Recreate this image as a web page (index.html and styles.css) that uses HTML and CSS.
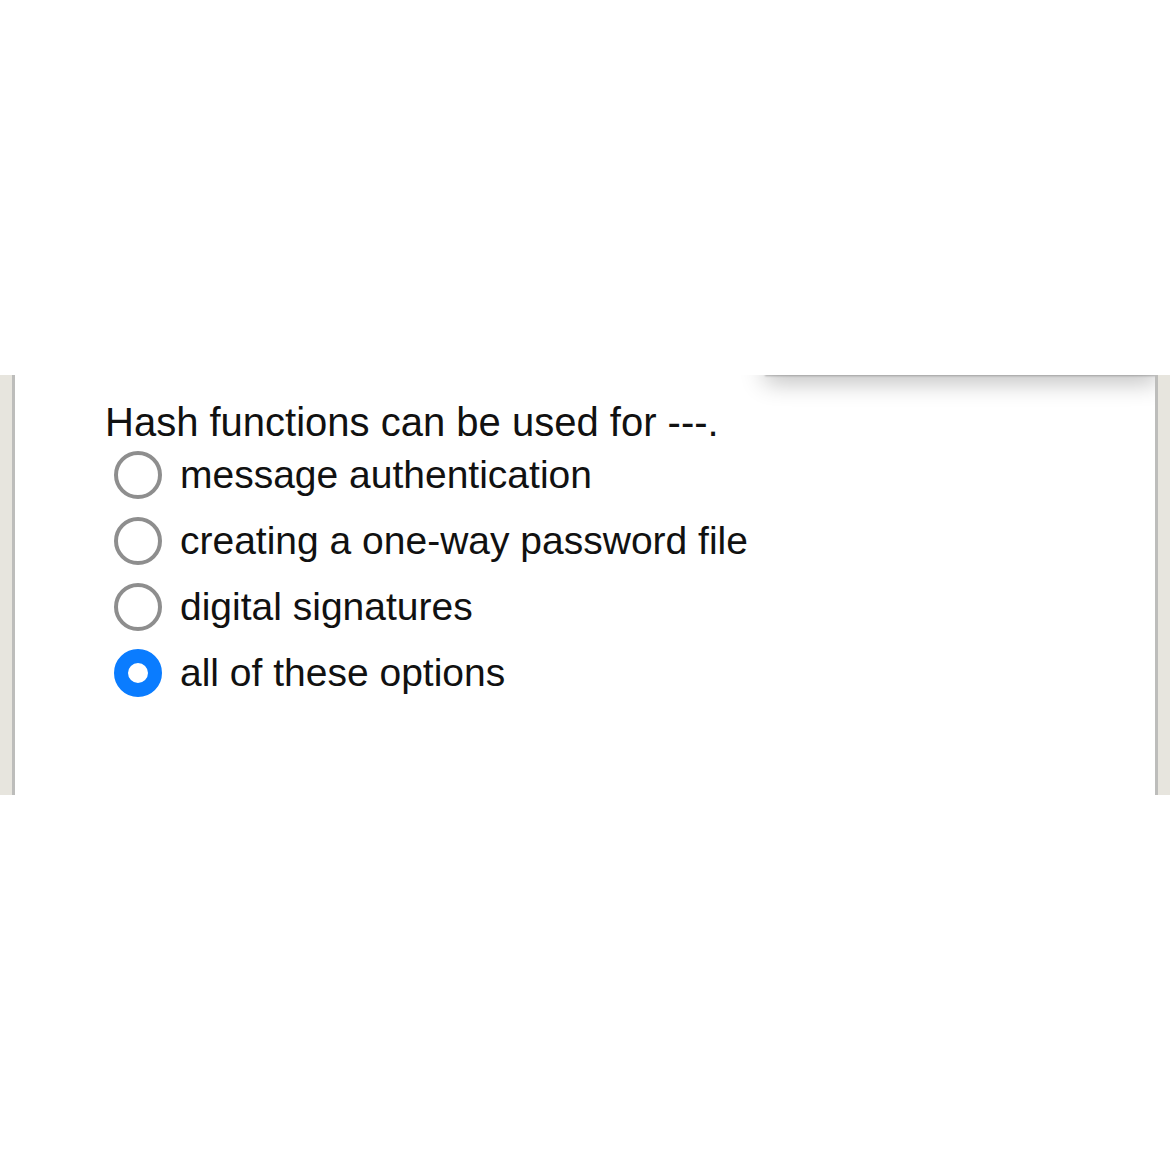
FILE: index.html
```html
<!DOCTYPE html>
<html>
<head>
<meta charset="utf-8">
<link rel="stylesheet" href="styles.css">
</head>
<body>
<div class="top"></div>
<div class="frame">
  <div class="side"></div>
  <div class="panel">
    <div class="shadow"></div>
    <div class="content">
      <div class="question">Hash functions can be used for ---.</div>
      <div class="options">
        <div class="option"><span class="radio"></span><span class="label">message authentication</span></div>
        <div class="option"><span class="radio"></span><span class="label">creating a one-way password file</span></div>
        <div class="option"><span class="radio"></span><span class="label">digital signatures</span></div>
        <div class="option"><span class="radio checked"></span><span class="label">all of these options</span></div>
      </div>
    </div>
  </div>
  <div class="side"></div>
</div>
</body>
</html>
```
FILE: styles.css
```css
html, body {
  margin: 0;
  padding: 0;
  background: #ffffff;
  font-family: "Liberation Sans", Arial, sans-serif;
  color: #111111;
}
.top {
  height: 375px;
}
.frame {
  display: flex;
  height: 420px;
}
.side {
  width: 12px;
  background: #e7e5de;
}
.panel {
  flex: 1;
  position: relative;
  background: #ffffff;
  border-left: 3px solid #bdbdbb;
  border-right: 3px solid #bdbdbb;
  overflow: hidden;
}
.shadow {
  position: absolute;
  top: -20px;
  left: 750px;
  right: -3px;
  height: 20px;
  box-shadow: 0 6px 24px rgba(0,0,0,0.3), 0 1px 2px rgba(0,0,0,0.25);
  background: #fff;
}
.content {
  padding: 24px 0 0 90px;
}
.question {
  font-size: 40px;
  line-height: 46px;
}
.options {
  display: flex;
  flex-direction: column;
  gap: 18px;
  margin-top: 6px;
  padding-left: 9px;
}
.option {
  display: flex;
  align-items: center;
  gap: 18px;
  height: 48px;
}
.radio {
  box-sizing: border-box;
  width: 48px;
  height: 48px;
  border-radius: 50%;
  border: 4px solid #8e8e8e;
  flex: none;
}
.radio.checked {
  border: 14px solid #0a7cff;
}
.label {
  font-size: 39px;
  line-height: 48px;
}
```
